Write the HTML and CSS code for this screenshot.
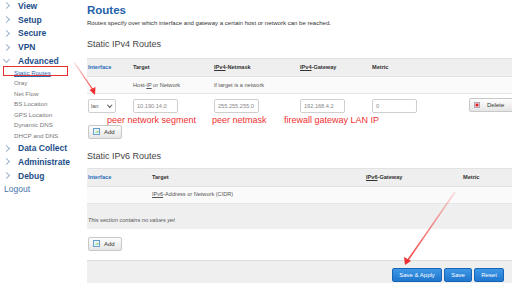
FILE: index.html
```html
<!DOCTYPE html>
<html lang="en">
<head>
    <meta charset="UTF-8">
    <title>Routes</title>
    <link rel="stylesheet" href="styles.css">
</head>
<body>
<div class="page">

    <!-- Left menu -->
    <div class="sidebar">
        <div class="menu-item"><span class="chev"></span>View</div>
        <div class="menu-item"><span class="chev"></span>Setup</div>
        <div class="menu-item"><span class="chev"></span>Secure</div>
        <div class="menu-item"><span class="chev"></span>VPN</div>
        <div class="menu-item"><span class="chev open"></span>Advanced</div>
        <div class="sub-item active">Static Routes</div>
        <div class="sub-item">Oray</div>
        <div class="sub-item">Net Flow</div>
        <div class="sub-item">BS Location</div>
        <div class="sub-item">GPS Location</div>
        <div class="sub-item">Dynamic DNS</div>
        <div class="sub-item">DHCP and DNS</div>
        <div class="menu-item"><span class="chev"></span>Data Collect</div>
        <div class="menu-item"><span class="chev"></span>Administrate</div>
        <div class="menu-item"><span class="chev"></span>Debug</div>
        <div class="logout">Logout</div>
    </div>

    <!-- Main content -->
    <div class="main">
        <h2 class="title">Routes</h2>
        <div class="desc">Routes specify over which interface and gateway a certain host or network can be reached.</div>

        <h3 class="section-title first">Static IPv4 Routes</h3>
        <table class="grid">
            <colgroup>
                <col style="width:45px"><col style="width:81px"><col style="width:86px">
                <col style="width:72px"><col style="width:97px"><col>
            </colgroup>
            <tr class="head">
                <th class="link">Interface</th>
                <th>Target</th>
                <th><abbr>IPv4</abbr>-Netmask</th>
                <th><abbr>IPv4</abbr>-Gateway</th>
                <th>Metric</th>
                <th></th>
            </tr>
            <tr class="hint">
                <td></td>
                <td>Host-<abbr>IP</abbr> or Network</td>
                <td>if target is a network</td>
                <td></td><td></td><td></td>
            </tr>
            <tr class="entry">
                <td><div class="select">lan<span class="caret"></span></div></td>
                <td><div class="input">10.190.14.0</div></td>
                <td><div class="input">255.255.255.0</div></td>
                <td><div class="input">192.168.4.2</div></td>
                <td><div class="input">0</div></td>
                <td>
                    <div class="btn">
                        <svg width="6" height="6" viewBox="0 0 6 6"><rect x="0.5" y="0.5" width="5" height="5" fill="#fff" stroke="#aab"/><rect x="1.5" y="1.5" width="3" height="3" fill="#e02020"/></svg>
                        Delete
                    </div>
                </td>
            </tr>
        </table>
        <div class="add-row">
            <div class="btn">
                <svg width="7" height="7" viewBox="0 0 7 7"><rect x="0.5" y="0.5" width="6" height="6" fill="#eaf6ff" stroke="#6a9fc8"/><path d="M1.5 4.5 L5.5 4.5 L5.5 2.5 Z" fill="#9cd06a"/></svg>
                Add
            </div>
        </div>

        <h3 class="section-title second">Static IPv6 Routes</h3>
        <table class="grid">
            <colgroup>
                <col style="width:64px"><col style="width:214px"><col style="width:97px"><col>
            </colgroup>
            <tr class="head">
                <th class="link">Interface</th>
                <th>Target</th>
                <th><abbr>IPv6</abbr>-Gateway</th>
                <th>Metric</th>
            </tr>
            <tr class="hint">
                <td></td>
                <td><abbr>IPv6</abbr>-Address or Network (CIDR)</td>
                <td></td><td></td>
            </tr>
            <tr class="empty">
                <td colspan="4">This section contains no values yet</td>
            </tr>
        </table>
        <div class="add-row last">
            <div class="btn">
                <svg width="7" height="7" viewBox="0 0 7 7"><rect x="0.5" y="0.5" width="6" height="6" fill="#eaf6ff" stroke="#6a9fc8"/><path d="M1.5 4.5 L5.5 4.5 L5.5 2.5 Z" fill="#9cd06a"/></svg>
                Add
            </div>
        </div>

        <div class="actions">
            <div class="btn-blue">Save &amp; Apply</div>
            <div class="btn-blue">Save</div>
            <div class="btn-blue">Reset</div>
        </div>
    </div>

    <!-- Red annotations drawn over the screenshot -->
    <div class="mark-box"></div>
    <span class="note note-target">peer network segment</span>
    <span class="note note-mask">peer netmask</span>
    <span class="note note-gw">firewall gateway LAN IP</span>
    <svg class="arrows" width="512" height="285" viewBox="0 0 512 285">
        <defs>
            <linearGradient id="fade1" x1="74" y1="62" x2="95" y2="94" gradientUnits="userSpaceOnUse">
                <stop offset="0" stop-color="#f03030" stop-opacity="0.15"/>
                <stop offset="1" stop-color="#f03030"/>
            </linearGradient>
            <linearGradient id="fade2" x1="455" y1="192" x2="405" y2="264" gradientUnits="userSpaceOnUse">
                <stop offset="0" stop-color="#f03030" stop-opacity="0.15"/>
                <stop offset="1" stop-color="#f03030"/>
            </linearGradient>
        </defs>
        <line x1="74" y1="62" x2="93" y2="90" stroke="url(#fade1)" stroke-width="1.3"/>
        <polygon points="95,95 89.5,90 95.5,87" fill="#f03030"/>
        <line x1="455" y1="192" x2="408" y2="260" stroke="url(#fade2)" stroke-width="1.5"/>
        <polygon points="405,265 404,257 411,261" fill="#f03030"/>
    </svg>
</div>
</body>
</html>
```

FILE: styles.css
```css
/* Basic styles */
body {
    margin: 0;
    overflow: hidden;
    background-color: #fff;
    font-family: 'Liberation Sans', Arial, sans-serif;
}

.page {
    position: relative; /* for the red annotations */
    display: flex;
    width: 512px;
    height: 285px;
    overflow: hidden;
}

/* Left menu */
.sidebar {
    width: 87px;
    flex-shrink: 0;
    margin-top: -1px;
}
.menu-item {
    display: flex;
    align-items: center;
    height: 13.75px;
    font-size: 8.5px;
    font-weight: bold;
    color: #1d4e89;
}
.chev {
    width: 4px;
    height: 4px;
    margin: 0 9px 0 4px;
    border-right: 1px solid #9fb4cc;
    border-top: 1px solid #9fb4cc;
    transform: rotate(45deg);
}
.chev.open {
    margin-top: -3px;
    transform: rotate(135deg);
}
.sub-item {
    height: 10.5px;
    line-height: 10.5px;
    padding-left: 14px;
    font-size: 6.2px;
    color: #777;
}
.sub-item.active {
    color: #2a68b0;
    text-decoration: underline;
}
.logout {
    height: 13.75px;
    line-height: 13.75px;
    padding-left: 4px;
    font-size: 8.5px;
    color: #4573ad;
}

/* Main content */
.main {
    flex: 1;
    display: flex;
    flex-direction: column;
}
.title {
    margin: 3px 0 0;
    font-size: 11.5px;
    line-height: 14px;
    color: #1f5fa8;
}
.desc {
    margin-top: 2px;
    font-size: 6.05px;
    line-height: 8px;
    color: #333;
}
.section-title {
    margin: 0;
    font-size: 9px;
    font-weight: normal;
    line-height: 12px;
    color: #444;
}
.section-title.first { margin: 11px 0 8px; }
.section-title.second { margin: 11px 0 6px; }

/* Tables */
.grid {
    width: 100%;
    table-layout: fixed;
    border-collapse: collapse;
    font-size: 5.6px;
    line-height: 7px;
}
.grid th, .grid td {
    padding: 0 0 0 1px;
    text-align: left;
    white-space: nowrap;
}
.grid abbr {
    text-decoration: underline;
}
.head {
    height: 18px;
    background-color: #efefef;
    border-top: 1px solid #e2e2e2;
    border-bottom: 1px solid #e2e2e2;
}
.head th {
    font-weight: bold;
    color: #333;
}
.head th.link {
    color: #2a6ebb;
}
.hint {
    height: 17px;
    background-color: #fafafa;
    border-bottom: 1px solid #e6e6e6;
    color: #555;
}
.entry {
    height: 22px;
}
.entry td {
    vertical-align: top;
    padding-top: 5px;
}
.empty td {
    height: 9px;
    padding: 12px 1px 4px;
    background-color: #efefef;
    font-style: italic;
    color: #555;
}

/* Form fields */
.input, .select {
    box-sizing: border-box;
    width: 45px;
    height: 14px;
    line-height: 12px;
    padding-left: 3px;
    border: 1px solid #cfcfcf;
    border-radius: 2px;
    background-color: #fff;
    color: #888;
}
.select {
    display: flex;
    justify-content: space-between;
    align-items: center;
    width: 28px;
    padding: 0 4px 0 2px;
    color: #555;
}
.caret {
    width: 2.5px;
    height: 2.5px;
    margin-top: -2px;
    border-right: 1px solid #555;
    border-bottom: 1px solid #555;
    transform: rotate(45deg);
}

/* Buttons */
.btn {
    box-sizing: border-box;
    display: inline-flex;
    align-items: center;
    gap: 4px;
    height: 14px;
    padding: 0 6px 0 4px;
    border: 1px solid #c8c8c8;
    border-radius: 2px;
    background: linear-gradient(#fdfdfd, #e6e6e6);
    font-size: 6px;
    color: #333;
}
.entry .btn {
    width: 48px;
    margin-top: -1px;
    gap: 7px;
}
.add-row {
    display: flex;
    margin: 9px 0 0 1px;
}
.add-row.last {
    margin-top: 8px;
}
.actions {
    display: flex;
    justify-content: flex-end;
    gap: 2px;
    height: 23px;
    margin-top: 9px;
    padding: 7px 8px 0 0;
    box-sizing: border-box;
    border-top: 1px solid #dcdcdc;
    background-color: #efefef;
}
.btn-blue {
    box-sizing: border-box;
    height: 14px;
    line-height: 12px;
    padding: 0 6px;
    border: 1px solid #1766b5;
    border-radius: 2px;
    background: linear-gradient(#3d97e6, #1f77cf);
    font-size: 6px;
    color: #fff;
    text-align: center;
}
.btn-blue:first-child { width: 50px; }
.btn-blue:nth-child(2) { width: 28px; }
.btn-blue:nth-child(3) { width: 30px; }

/* Red annotations */
.mark-box {
    position: absolute;
    left: 3px;
    top: 66px;
    width: 63px;
    height: 8px;
    border: 1.5px solid #e8312f;
}
.note {
    position: absolute;
    top: 114px;
    font-size: 9px;
    line-height: 12px;
    color: #f03030;
}
.note-target { left: 107px; }
.note-mask { left: 212px; }
.note-gw { left: 284px; }
.arrows {
    position: absolute;
    left: 0;
    top: 0;
}
```
